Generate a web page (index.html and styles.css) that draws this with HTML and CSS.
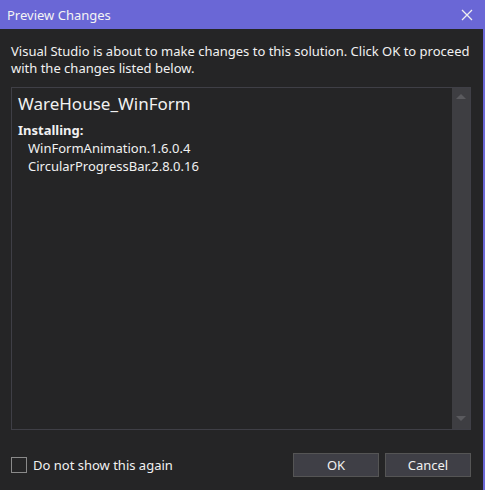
FILE: index.html
```html
<!DOCTYPE html>
<html lang="en">
<head>
    <meta charset="UTF-8">
    <title>Preview Changes</title>
    <link rel="stylesheet" href="styles.css">
</head>
<body>
    <div class="dialog">
        <div class="titlebar">
            <span class="title">Preview Changes</span>
            <svg class="close" width="12" height="12" viewBox="0 0 12 12">
                <path d="M1 1 L11 11 M11 1 L1 11" stroke="#f0f0f0" stroke-width="1.3"/>
            </svg>
        </div>

        <div class="content">
            <p class="intro">Visual Studio is about to make changes to this solution. Click OK to proceed with the changes listed below.</p>

            <div class="changes">
                <div class="changes-list">
                    <div class="project">WareHouse_WinForm</div>
                    <div class="section">Installing:</div>
                    <div class="package">WinFormAnimation.1.6.0.4</div>
                    <div class="package">CircularProgressBar.2.8.0.16</div>
                </div>
                <div class="scrollbar">
                    <span class="arrow up"></span>
                    <span class="arrow down"></span>
                </div>
            </div>

            <div class="footer">
                <label class="check">
                    <span class="box"></span>
                    Do not show this again
                </label>
                <div class="buttons">
                    <button>OK</button>
                    <button>Cancel</button>
                </div>
            </div>
        </div>
    </div>
</body>
</html>
```

FILE: styles.css
```css
body {
    margin: 0;
    font-family: "Noto Sans", "Open Sans", sans-serif;
    font-size: 13px;
    color: #f1f1f1;
    background: #252526;
}
.dialog {
    width: 483px;
    height: 490px;
    border-right: 2px solid #6a67d6;
    display: flex;
    flex-direction: column;
    background: #252526;
}
.titlebar {
    height: 29px;
    background: #6a67d6;
    display: flex;
    align-items: center;
    justify-content: space-between;
    padding: 0 10px 0 7px;
}
.title {
    color: #f4f4f4;
    font-size: 13px;
}
.content {
    flex: 1;
    display: flex;
    flex-direction: column;
    padding: 0 12px 0 11px;
}
.intro {
    margin: 14px 0 10px;
    line-height: 17px;
}
.changes {
    height: 341px;
    border: 1px solid #3f3f46;
    display: flex;
    background: #252526;
}
.changes-list {
    flex: 1;
    padding: 4px 6px;
}
.project {
    font-size: 17px;
    line-height: 24px;
    margin-bottom: 6px;
}
.section {
    font-weight: bold;
    line-height: 17px;
}
.package {
    padding-left: 10px;
    line-height: 18px;
}
.scrollbar {
    width: 18px;
    background: #3e3e42;
    display: flex;
    flex-direction: column;
    justify-content: space-between;
    align-items: center;
    padding: 6px 0 8px;
}
.arrow {
    width: 0;
    height: 0;
    border-left: 5px solid transparent;
    border-right: 5px solid transparent;
}
.arrow.up {
    border-bottom: 5px solid #5a5a5e;
}
.arrow.down {
    border-top: 5px solid #5a5a5e;
}
.footer {
    display: flex;
    justify-content: space-between;
    align-items: center;
    margin-top: 23px;
}
.check {
    display: flex;
    align-items: center;
    gap: 6px;
}
.box {
    width: 14px;
    height: 14px;
    border: 1px solid #8a8a8a;
}
.buttons {
    display: flex;
    gap: 6px;
}
button {
    width: 86px;
    height: 24px;
    background: #3f3f46;
    border: 1px solid #555555;
    color: #f1f1f1;
    font-family: inherit;
    font-size: 13px;
    padding: 0;
}
```
